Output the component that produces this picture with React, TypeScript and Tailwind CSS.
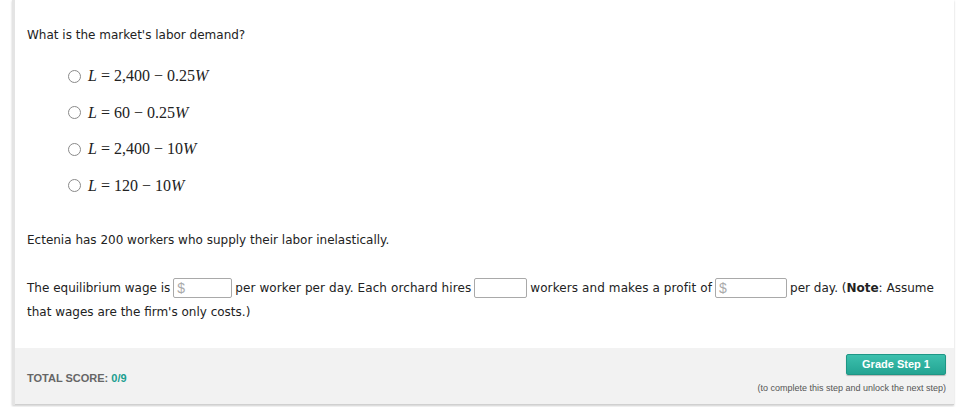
import React from "react";

const options = [
  { a: "2,400", b: "0.25" },
  { a: "60", b: "0.25" },
  { a: "2,400", b: "10" },
  { a: "120", b: "10" },
];

function Radio() {
  return <span className="inline-block w-[13px] h-[13px] rounded-full border border-[#8a8a8a] bg-white" />;
}

function Blank({ w, dollar }: { w: string; dollar?: boolean }) {
  return (
    <span
      className={`inline-flex items-center h-[20px] align-middle border border-[#a9a9a9] rounded-[2px] bg-white mx-[3px] px-[3px] text-[#aaa] font-['Liberation_Sans',sans-serif] text-[14px] leading-none ${w}`}
    >
      {dollar ? "$" : ""}
    </span>
  );
}

export default function App() {
  return (
    <div className="w-[957px] h-[407px] bg-white overflow-hidden">
      <div className="ml-[12px] mr-[3px] h-[405px] flex flex-col bg-white border-l-[3px] border-[#e4e4e4] shadow-[0_1px_2px_rgba(0,0,0,0.2)]">
        <div className="flex-1 pl-[12px] pr-[12px] font-['DejaVu_Sans',Verdana,sans-serif] text-[12px] text-[#222]">
          <p className="pt-[28px] leading-[15px]">What is the market's labor demand?</p>
          <div className="mt-[25px] pl-[41px] flex flex-col gap-[20.5px]">
            {options.map((o, i) => (
              <div key={i} className="flex items-center gap-[7px] h-[16px]">
                <Radio />
                <span className="font-['Liberation_Serif',serif] text-[16px] text-[#222] whitespace-nowrap">
                  <i>L</i> = {o.a} − {o.b}<i>W</i>
                </span>
              </div>
            ))}
          </div>
          <p className="mt-[39px] leading-[15px]">Ectenia has 200 workers who supply their labor inelastically.</p>
          <p className="mt-[28px] leading-[24px]">
            The equilibrium wage is<Blank w="w-[59px]" dollar />
            <span className="tracking-[0.1px]">per worker per day. Each orchard hires</span>
            <Blank w="w-[53px]" />
            <span className="tracking-[0.1px]">workers and makes a profit of</span>
            <Blank w="w-[72px]" dollar />per day. (<b>Note</b>: Assume
            that wages are the firm's only costs.)
          </p>
        </div>
        <div className="h-[57px] bg-[#f2f2f2] border-b border-[#d0d0d0] flex items-start justify-between pl-[12px] pr-[8px] font-['Liberation_Sans',Arial,sans-serif]">
          <div className="pt-[22px] text-[11px] font-bold text-[#666]">
            TOTAL SCORE: <span className="text-[#1a9e8f]">0/9</span>
          </div>
          <div className="pt-[6px] flex flex-col items-end">
            <button className="w-[100px] h-[21px] rounded-[2px] bg-gradient-to-b from-[#3cc0ad] to-[#23a493] border border-[#1e9685] shadow-[0_1px_1px_rgba(0,0,0,0.25)] text-white text-[11px] font-bold">
              Grade Step 1
            </button>
            <div className="mt-[7px] text-[9px] text-[#555]">(to complete this step and unlock the next step)</div>
          </div>
        </div>
      </div>
    </div>
  );
}
